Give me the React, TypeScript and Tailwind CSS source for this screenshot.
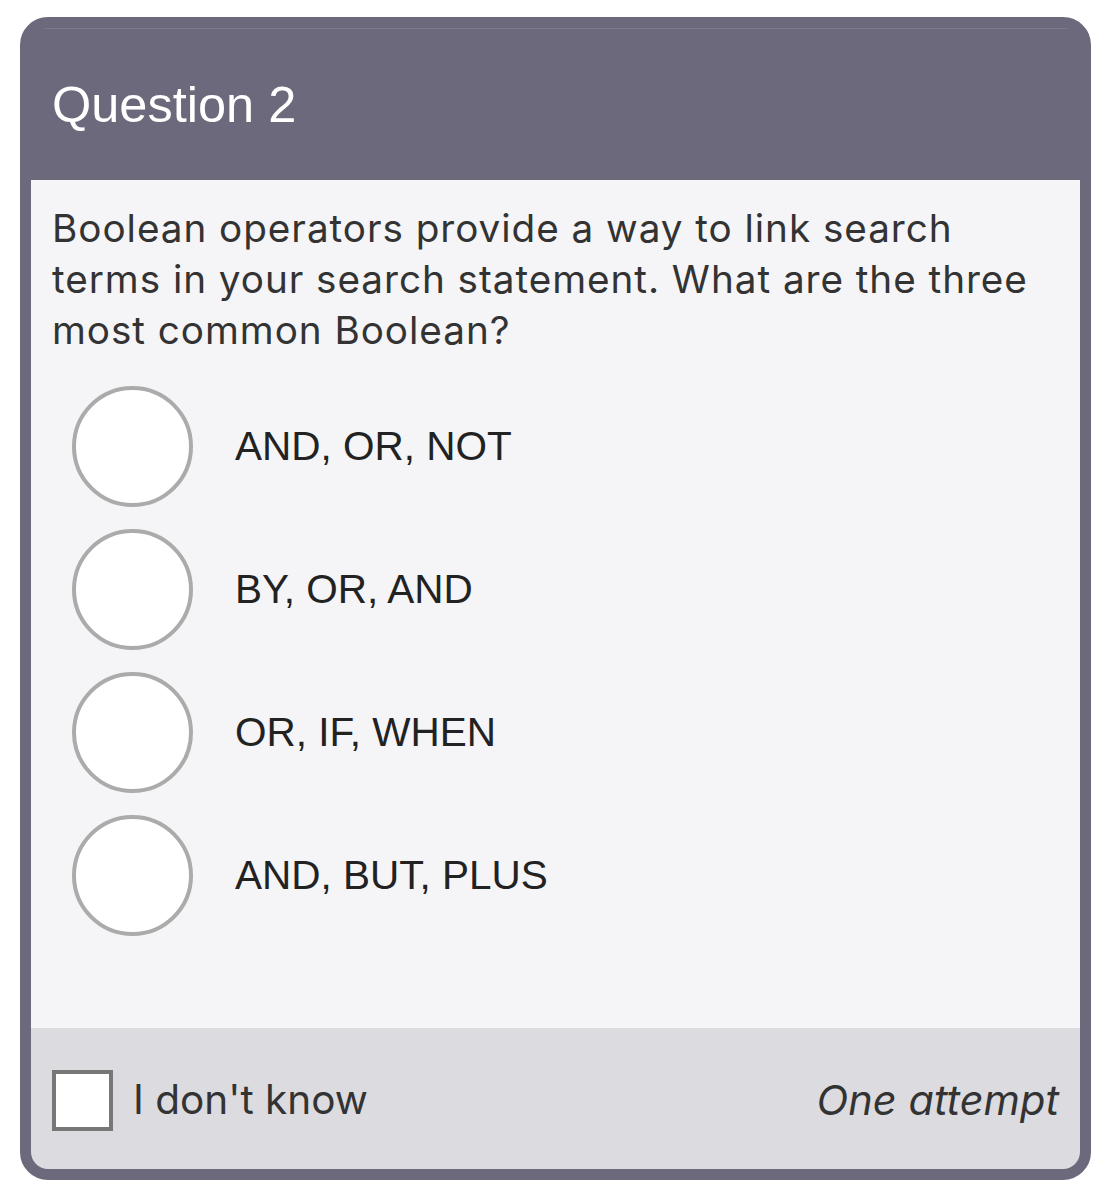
export default function App() {
  const options = ['AND, OR, NOT', 'BY, OR, AND', 'OR, IF, WHEN', 'AND, BUT, PLUS']
  return (
    <div className="w-[1113px] h-[1200px] bg-white pt-[17px] pl-[20px]">
      <div className="w-[1071px] h-[1163px] rounded-[28px] border-[11px] border-[#6b697b] bg-[#6b697b] flex flex-col overflow-hidden">
        <div className="h-[152px] shrink-0 flex items-center px-[21px] border-t border-[#7d7b8c]">
          <h1 className="text-white text-[50.5px] font-['Liberation_Sans',sans-serif] leading-none pt-[2px]">Question 2</h1>
        </div>
        <div className="flex-1 bg-[#f5f5f7] px-[21px] pt-[23px] text-[#333]">
          <p className="font-['Inter',sans-serif] text-[38.7px] leading-[51px] tracking-[0.95px] whitespace-nowrap">
            Boolean operators provide a way to link search
            <br />
            terms in your search statement. What are the three
            <br />
            most common Boolean?
          </p>
          <div className="mt-[30px] flex flex-col gap-[22px]">
            {options.map(o => (
              <label key={o} className="flex items-center gap-[42px] pl-[20px]">
                <span className="w-[121px] h-[121px] rounded-full border-[4px] border-[#ababab] bg-white shrink-0" />
                <span className="font-['Liberation_Sans',sans-serif] text-[40.5px] text-[#222]">{o}</span>
              </label>
            ))}
          </div>
        </div>
        <div className="h-[141px] shrink-0 bg-[#dcdbe0] flex items-center justify-between px-[21px] pt-[4px] text-[#333] font-['Inter',sans-serif]">
          <div className="flex items-center gap-[20px]">
            <span className="w-[61px] h-[61px] border-[4px] border-[#777] bg-white" />
            <span className="text-[40.5px]">I don't know</span>
          </div>
          <span className="italic text-[41.5px]">One attempt</span>
        </div>
      </div>
    </div>
  )
}
